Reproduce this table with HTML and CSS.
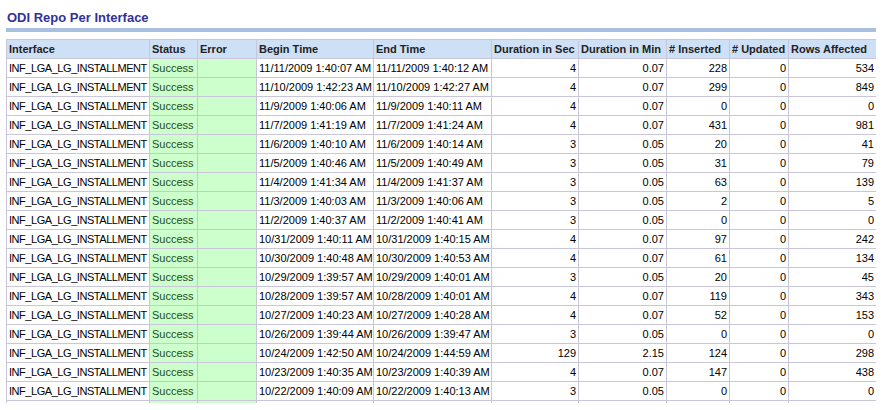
FILE: index.html
```html
<!DOCTYPE html>
<html>
<head>
<meta charset="utf-8">
<link rel="stylesheet" href="styles.css">
</head>
<body>
<div class="page">
  <h1 class="title">ODI Repo Per Interface</h1>
  <div class="rule"></div>
  <div class="scroller">
  <table class="grid">
    <colgroup>
      <col class="c1"><col class="c2"><col class="c3"><col class="c4"><col class="c5">
      <col class="c6"><col class="c7"><col class="c8"><col class="c9"><col class="c10">
    </colgroup>
    <thead>
      <tr>
        <th>Interface</th><th>Status</th><th>Error</th><th>Begin Time</th><th>End Time</th>
        <th>Duration in Sec</th><th>Duration in Min</th><th># Inserted</th><th># Updated</th><th>Rows Affected</th>
      </tr>
    </thead>
    <tbody>
      <tr><td class="nm">INF_LGA_LG_INSTALLMENT</td><td class="ok">Success</td><td class="ok"></td><td>11/11/2009 1:40:07 AM</td><td>11/11/2009 1:40:12 AM</td><td class="n">4</td><td class="n">0.07</td><td class="n">228</td><td class="n">0</td><td class="n">534</td></tr>
      <tr><td class="nm">INF_LGA_LG_INSTALLMENT</td><td class="ok">Success</td><td class="ok"></td><td>11/10/2009 1:42:23 AM</td><td>11/10/2009 1:42:27 AM</td><td class="n">4</td><td class="n">0.07</td><td class="n">299</td><td class="n">0</td><td class="n">849</td></tr>
      <tr><td class="nm">INF_LGA_LG_INSTALLMENT</td><td class="ok">Success</td><td class="ok"></td><td>11/9/2009 1:40:06 AM</td><td>11/9/2009 1:40:11 AM</td><td class="n">4</td><td class="n">0.07</td><td class="n">0</td><td class="n">0</td><td class="n">0</td></tr>
      <tr><td class="nm">INF_LGA_LG_INSTALLMENT</td><td class="ok">Success</td><td class="ok"></td><td>11/7/2009 1:41:19 AM</td><td>11/7/2009 1:41:24 AM</td><td class="n">4</td><td class="n">0.07</td><td class="n">431</td><td class="n">0</td><td class="n">981</td></tr>
      <tr><td class="nm">INF_LGA_LG_INSTALLMENT</td><td class="ok">Success</td><td class="ok"></td><td>11/6/2009 1:40:10 AM</td><td>11/6/2009 1:40:14 AM</td><td class="n">3</td><td class="n">0.05</td><td class="n">20</td><td class="n">0</td><td class="n">41</td></tr>
      <tr><td class="nm">INF_LGA_LG_INSTALLMENT</td><td class="ok">Success</td><td class="ok"></td><td>11/5/2009 1:40:46 AM</td><td>11/5/2009 1:40:49 AM</td><td class="n">3</td><td class="n">0.05</td><td class="n">31</td><td class="n">0</td><td class="n">79</td></tr>
      <tr><td class="nm">INF_LGA_LG_INSTALLMENT</td><td class="ok">Success</td><td class="ok"></td><td>11/4/2009 1:41:34 AM</td><td>11/4/2009 1:41:37 AM</td><td class="n">3</td><td class="n">0.05</td><td class="n">63</td><td class="n">0</td><td class="n">139</td></tr>
      <tr><td class="nm">INF_LGA_LG_INSTALLMENT</td><td class="ok">Success</td><td class="ok"></td><td>11/3/2009 1:40:03 AM</td><td>11/3/2009 1:40:06 AM</td><td class="n">3</td><td class="n">0.05</td><td class="n">2</td><td class="n">0</td><td class="n">5</td></tr>
      <tr><td class="nm">INF_LGA_LG_INSTALLMENT</td><td class="ok">Success</td><td class="ok"></td><td>11/2/2009 1:40:37 AM</td><td>11/2/2009 1:40:41 AM</td><td class="n">3</td><td class="n">0.05</td><td class="n">0</td><td class="n">0</td><td class="n">0</td></tr>
      <tr><td class="nm">INF_LGA_LG_INSTALLMENT</td><td class="ok">Success</td><td class="ok"></td><td>10/31/2009 1:40:11 AM</td><td>10/31/2009 1:40:15 AM</td><td class="n">4</td><td class="n">0.07</td><td class="n">97</td><td class="n">0</td><td class="n">242</td></tr>
      <tr><td class="nm">INF_LGA_LG_INSTALLMENT</td><td class="ok">Success</td><td class="ok"></td><td>10/30/2009 1:40:48 AM</td><td>10/30/2009 1:40:53 AM</td><td class="n">4</td><td class="n">0.07</td><td class="n">61</td><td class="n">0</td><td class="n">134</td></tr>
      <tr><td class="nm">INF_LGA_LG_INSTALLMENT</td><td class="ok">Success</td><td class="ok"></td><td>10/29/2009 1:39:57 AM</td><td>10/29/2009 1:40:01 AM</td><td class="n">3</td><td class="n">0.05</td><td class="n">20</td><td class="n">0</td><td class="n">45</td></tr>
      <tr><td class="nm">INF_LGA_LG_INSTALLMENT</td><td class="ok">Success</td><td class="ok"></td><td>10/28/2009 1:39:57 AM</td><td>10/28/2009 1:40:01 AM</td><td class="n">4</td><td class="n">0.07</td><td class="n">119</td><td class="n">0</td><td class="n">343</td></tr>
      <tr><td class="nm">INF_LGA_LG_INSTALLMENT</td><td class="ok">Success</td><td class="ok"></td><td>10/27/2009 1:40:23 AM</td><td>10/27/2009 1:40:28 AM</td><td class="n">4</td><td class="n">0.07</td><td class="n">52</td><td class="n">0</td><td class="n">153</td></tr>
      <tr><td class="nm">INF_LGA_LG_INSTALLMENT</td><td class="ok">Success</td><td class="ok"></td><td>10/26/2009 1:39:44 AM</td><td>10/26/2009 1:39:47 AM</td><td class="n">3</td><td class="n">0.05</td><td class="n">0</td><td class="n">0</td><td class="n">0</td></tr>
      <tr><td class="nm">INF_LGA_LG_INSTALLMENT</td><td class="ok">Success</td><td class="ok"></td><td>10/24/2009 1:42:50 AM</td><td>10/24/2009 1:44:59 AM</td><td class="n">129</td><td class="n">2.15</td><td class="n">124</td><td class="n">0</td><td class="n">298</td></tr>
      <tr><td class="nm">INF_LGA_LG_INSTALLMENT</td><td class="ok">Success</td><td class="ok"></td><td>10/23/2009 1:40:35 AM</td><td>10/23/2009 1:40:39 AM</td><td class="n">4</td><td class="n">0.07</td><td class="n">147</td><td class="n">0</td><td class="n">438</td></tr>
      <tr><td class="nm">INF_LGA_LG_INSTALLMENT</td><td class="ok">Success</td><td class="ok"></td><td>10/22/2009 1:40:09 AM</td><td>10/22/2009 1:40:13 AM</td><td class="n">3</td><td class="n">0.05</td><td class="n">0</td><td class="n">0</td><td class="n">0</td></tr>
      <tr><td class="nm"></td><td class="ok"></td><td class="ok"></td><td></td><td></td><td class="n"></td><td class="n"></td><td class="n"></td><td class="n"></td><td class="n"></td></tr>
    </tbody>
  </table>
  </div>
</div>
</body>
</html>
```

FILE: styles.css
```css
html, body {
  margin: 0;
  padding: 0;
  background: #ffffff;
  overflow: hidden;
}
.page {
  padding: 10px 17px 0 6px;
  font-family: "Liberation Sans", Arial, sans-serif;
}
.title {
  margin: 0 0 0 1px;
  font-size: 13px;
  font-weight: bold;
  color: #2f3399;
  line-height: 16px;
  height: 18px;
}
.rule {
  height: 4px;
  background: #a9bfdf;
  margin-bottom: 7px;
}
.scroller {
  height: 364px;
  overflow: hidden;
}
.grid {
  border-collapse: collapse;
  table-layout: fixed;
  width: 871px;
  font-size: 11px;
  color: #000;
}
.c1 { width: 143px; }
.c2 { width: 48px; }
.c3 { width: 59px; }
.c4 { width: 117px; }
.c5 { width: 118px; }
.c6 { width: 87px; }
.c7 { width: 88px; }
.c8 { width: 63px; }
.c9 { width: 59px; }
.c10 { width: 88px; }
.grid th, .grid td {
  border: 1px solid #c9c6da;
  height: 18px;
  padding: 0 2px;
  white-space: nowrap;
  overflow: hidden;
  line-height: 16px;
}
.grid th {
  background: #cde0f5;
  text-align: left;
  font-weight: bold;
  color: #222;
  font-size: 11px;
}
.grid td.nm {
  letter-spacing: -0.45px;
}
.grid td.ok {
  background: #ccffcc;
  color: #1d4d1d;
}
.grid td.n {
  text-align: right;
}
```
